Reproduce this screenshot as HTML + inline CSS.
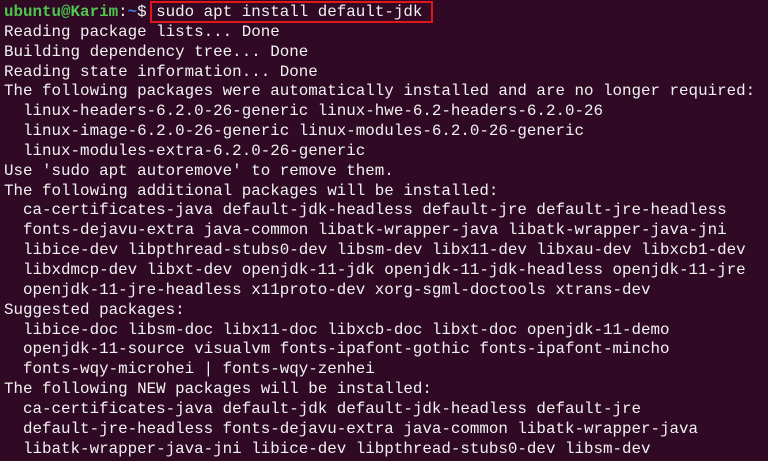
<!DOCTYPE html>
<html><head><style>
html,body{margin:0;padding:0;width:768px;height:461px;overflow:hidden;background:#300a24;}
pre{margin:0;position:absolute;left:4px;top:3px;font-family:"Liberation Mono",monospace;font-size:15.85px;line-height:19.85px;color:#f2f2f2;white-space:pre;}
.g{color:#4ec74e;font-weight:bold}
.b{color:#3f7ee8;font-weight:bold}
.box{position:absolute;left:150px;top:1px;width:283px;height:22px;border:2px solid #e0161a;box-sizing:border-box;}
</style></head><body>
<pre><span class="g">ubuntu@Karim</span>:<span class="b">~</span>$ sudo apt install default-jdk
Reading package lists... Done
Building dependency tree... Done
Reading state information... Done
The following packages were automatically installed and are no longer required:
  linux-headers-6.2.0-26-generic linux-hwe-6.2-headers-6.2.0-26
  linux-image-6.2.0-26-generic linux-modules-6.2.0-26-generic
  linux-modules-extra-6.2.0-26-generic
Use 'sudo apt autoremove' to remove them.
The following additional packages will be installed:
  ca-certificates-java default-jdk-headless default-jre default-jre-headless
  fonts-dejavu-extra java-common libatk-wrapper-java libatk-wrapper-java-jni
  libice-dev libpthread-stubs0-dev libsm-dev libx11-dev libxau-dev libxcb1-dev
  libxdmcp-dev libxt-dev openjdk-11-jdk openjdk-11-jdk-headless openjdk-11-jre
  openjdk-11-jre-headless x11proto-dev xorg-sgml-doctools xtrans-dev
Suggested packages:
  libice-doc libsm-doc libx11-doc libxcb-doc libxt-doc openjdk-11-demo
  openjdk-11-source visualvm fonts-ipafont-gothic fonts-ipafont-mincho
  fonts-wqy-microhei | fonts-wqy-zenhei
The following NEW packages will be installed:
  ca-certificates-java default-jdk default-jdk-headless default-jre
  default-jre-headless fonts-dejavu-extra java-common libatk-wrapper-java
  libatk-wrapper-java-jni libice-dev libpthread-stubs0-dev libsm-dev</pre>
<div class="box"></div>
</body></html>
